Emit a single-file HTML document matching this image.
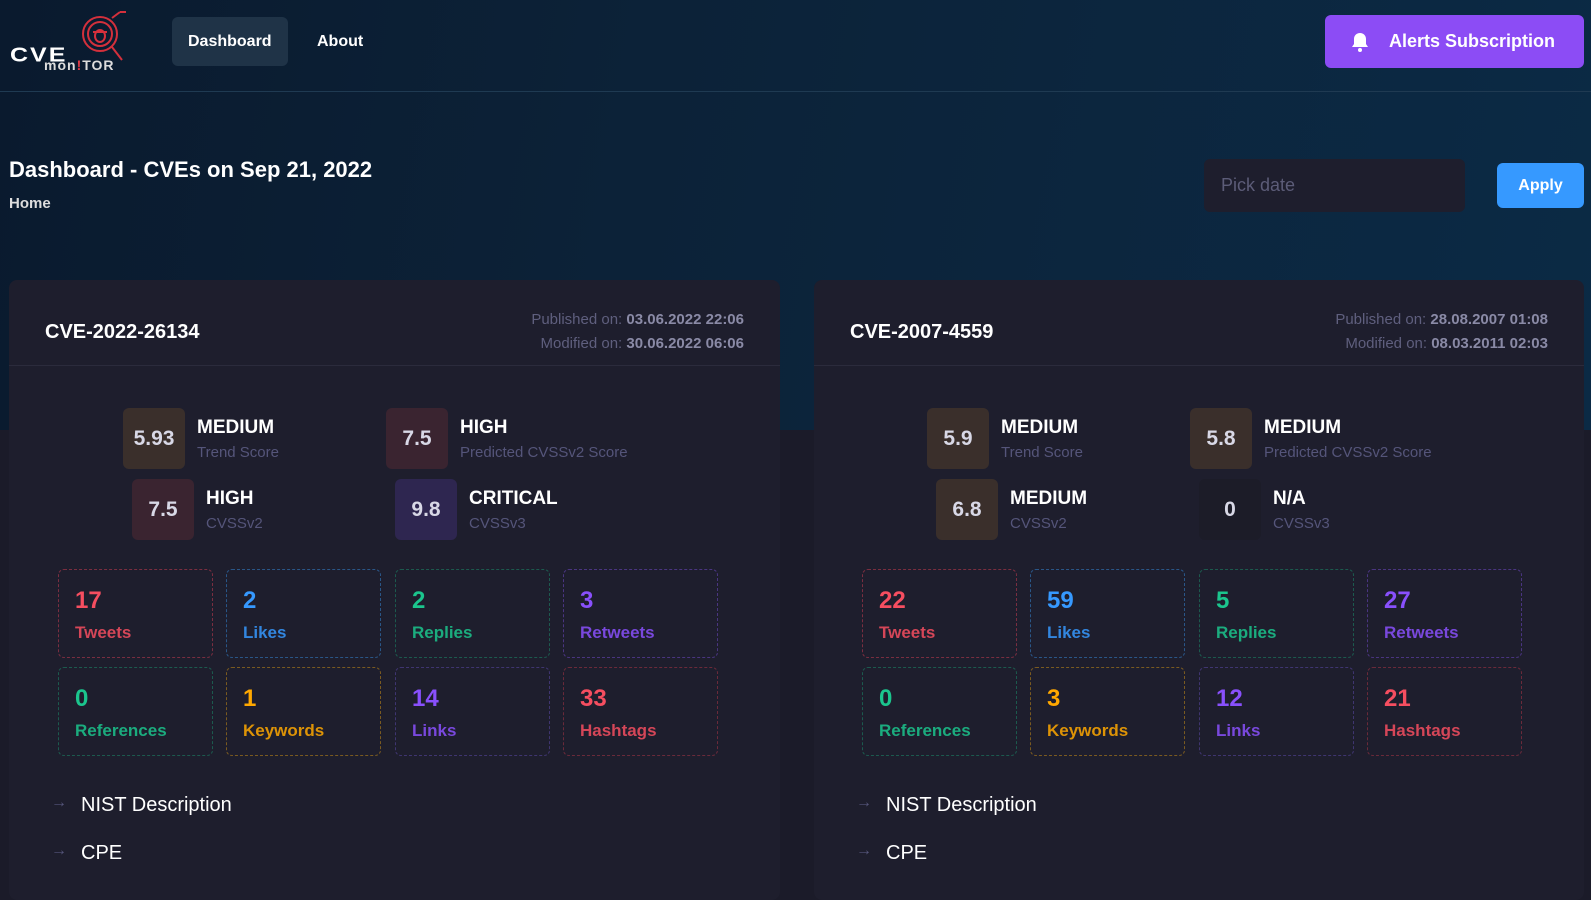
<!DOCTYPE html>
<html><head><meta charset="utf-8"><style>
*{box-sizing:border-box;margin:0;padding:0}
body{width:1591px;height:885px;overflow:hidden;font-family:"Liberation Sans",sans-serif;background:#1b1b29;position:relative;color:#fff}
.top{position:absolute;left:0;top:0;width:1591px;height:430px;background:linear-gradient(100deg,#0a1a2e 0%,#0c2238 40%,#0b2a45 100%)}
.hl{position:absolute;left:0;top:91px;width:1591px;height:1px;background:#1f3a52}
.nav{position:absolute;top:17px;height:49px;line-height:49px;font-size:16px;font-weight:bold;border-radius:6px;padding:0 16px}
.alert{position:absolute;left:1325px;top:15px;width:259px;height:53px;background:#8c4cf5;border-radius:6px;font-size:18px;font-weight:bold;line-height:53px;padding-left:64px}
.card{position:absolute;top:280px;width:771px;height:620px;background:#1e1e2d;border-radius:8px}
.ch{height:86px;border-bottom:1px solid #2b2b3c;position:relative}
.cid{position:absolute;left:36px;top:41px;font-size:20px;font-weight:bold}
.pub{position:absolute;right:36px;top:28px;text-align:right;font-size:15px;line-height:24px;color:#5f5f7e}
.pub b{color:#8a8aa6}
.sc{position:absolute;display:flex;align-items:center}
.sb{width:62px;height:61px;border-radius:6px;display:flex;align-items:center;justify-content:center;font-size:21px;font-weight:bold;color:#d8d8e6}
.st{margin-left:12px}
.st b{display:block;font-size:19px}
.st span{display:block;font-size:15px;color:#55557a;margin-top:5px}
.box{position:absolute;width:155px;height:89px;border:1px dashed;border-radius:6px;padding:17px 0 0 16px}
.box b{display:block;font-size:24px}
.box span{display:block;font-size:17px;font-weight:bold;margin-top:8px;opacity:.85}
.acc{position:absolute;left:72px;font-size:20px}
.ar{position:absolute;left:-30px;color:#55557a;font-size:16px}
</style></head><body>
<div class="top"></div>
<div class="hl"></div>
<div style="position:absolute;left:10px;top:41px;font-size:25px;font-weight:bold;letter-spacing:2px;transform:scaleY(.8)">CVE</div>
<div style="position:absolute;left:44px;top:57px;font-size:14px;font-weight:bold;letter-spacing:1px;color:#ddd">mon<span style="color:#e03a45">!</span>TOR</div>
<svg style="position:absolute;left:78px;top:10px" width="52" height="60" viewBox="0 0 52 60" fill="none" stroke="#d4303c" stroke-width="2"><circle cx="22" cy="24" r="17"/><circle cx="22" cy="24" r="12"/><line x1="34" y1="37" x2="44" y2="50"/><line x1="34" y1="8" x2="42" y2="2"/><line x1="42" y1="2" x2="48" y2="2"/><ellipse cx="22" cy="26" rx="5" ry="6"/><line x1="15" y1="22" x2="29" y2="22"/></svg>
<div class="nav" style="left:172px;background:#1f3347">Dashboard</div>
<div class="nav" style="left:301px">About</div>
<div class="alert"><svg style="position:absolute;left:26px;top:17px" width="18" height="20" viewBox="0 0 18 20"><path d="M9 1c-3.5 0-6 2.6-6 6v5l-2 3h16l-2-3V7c0-3.4-2.5-6-6-6z" fill="#fff"/><circle cx="9" cy="18" r="2" fill="#fff"/></svg>Alerts Subscription</div>
<div style="position:absolute;left:9px;top:157px;font-size:22px;font-weight:bold">Dashboard - CVEs on Sep 21, 2022</div>
<div style="position:absolute;left:9px;top:195px;font-size:15px;font-weight:bold;color:#ddd">Home</div>
<div style="position:absolute;left:1204px;top:159px;width:261px;height:53px;background:#1e1e2d;border-radius:6px;font-size:18px;color:#5c5c78;line-height:53px;padding-left:17px">Pick date</div>
<div style="position:absolute;left:1497px;top:163px;width:87px;height:45px;background:#3699ff;border-radius:6px;font-size:16px;font-weight:bold;line-height:45px;text-align:center">Apply</div>

<div class="card" style="left:9px">
<div class="ch"><div class="cid">CVE-2022-26134</div><div class="pub">Published on: <b>03.06.2022 22:06</b><br>Modified on: <b>30.06.2022 06:06</b></div></div>
<div class="sc" style="left:114px;top:128px"><div class="sb" style="background:#3a2f2b">5.93</div><div class="st"><b>MEDIUM</b><span>Trend Score</span></div></div>
<div class="sc" style="left:377px;top:128px"><div class="sb" style="background:#3a2430">7.5</div><div class="st"><b>HIGH</b><span>Predicted CVSSv2 Score</span></div></div>
<div class="sc" style="left:123px;top:199px"><div class="sb" style="background:#3a2430">7.5</div><div class="st"><b>HIGH</b><span>CVSSv2</span></div></div>
<div class="sc" style="left:386px;top:199px"><div class="sb" style="background:#2e2650">9.8</div><div class="st"><b>CRITICAL</b><span>CVSSv3</span></div></div>
<div class="box" style="left:49px;top:289px;border-color:#7a2e40;color:#f64e60"><b>17</b><span>Tweets</span></div>
<div class="box" style="left:217px;top:289px;border-color:#2a5687;color:#3699ff"><b>2</b><span>Likes</span></div>
<div class="box" style="left:386px;top:289px;border-color:#1c5a4e;color:#1bc58d"><b>2</b><span>Replies</span></div>
<div class="box" style="left:554px;top:289px;border-color:#4a3580;color:#8950fc"><b>3</b><span>Retweets</span></div>
<div class="box" style="left:49px;top:387px;border-color:#1c5a4e;color:#1bc58d"><b>0</b><span>References</span></div>
<div class="box" style="left:217px;top:387px;border-color:#7a5a20;color:#ffa800"><b>1</b><span>Keywords</span></div>
<div class="box" style="left:386px;top:387px;border-color:#3f3570;color:#8950fc"><b>14</b><span>Links</span></div>
<div class="box" style="left:554px;top:387px;border-color:#6a2a3a;color:#f64e60"><b>33</b><span>Hashtags</span></div>
<div class="acc" style="top:514px"><span class="ar">→</span>NIST Description</div>
<div class="acc" style="top:562px"><span class="ar">→</span>CPE</div>
</div>

<div class="card" style="left:814px;width:770px">
<div class="ch"><div class="cid">CVE-2007-4559</div><div class="pub">Published on: <b>28.08.2007 01:08</b><br>Modified on: <b>08.03.2011 02:03</b></div></div>
<div class="sc" style="left:113px;top:128px"><div class="sb" style="background:#3a2f2b">5.9</div><div class="st"><b>MEDIUM</b><span>Trend Score</span></div></div>
<div class="sc" style="left:376px;top:128px"><div class="sb" style="background:#3a2f2b">5.8</div><div class="st"><b>MEDIUM</b><span>Predicted CVSSv2 Score</span></div></div>
<div class="sc" style="left:122px;top:199px"><div class="sb" style="background:#3a2f2b">6.8</div><div class="st"><b>MEDIUM</b><span>CVSSv2</span></div></div>
<div class="sc" style="left:385px;top:199px"><div class="sb" style="background:#1c1c28">0</div><div class="st"><b>N/A</b><span>CVSSv3</span></div></div>
<div class="box" style="left:48px;top:289px;border-color:#7a2e40;color:#f64e60"><b>22</b><span>Tweets</span></div>
<div class="box" style="left:216px;top:289px;border-color:#2a5687;color:#3699ff"><b>59</b><span>Likes</span></div>
<div class="box" style="left:385px;top:289px;border-color:#1c5a4e;color:#1bc58d"><b>5</b><span>Replies</span></div>
<div class="box" style="left:553px;top:289px;border-color:#4a3580;color:#8950fc"><b>27</b><span>Retweets</span></div>
<div class="box" style="left:48px;top:387px;border-color:#1c5a4e;color:#1bc58d"><b>0</b><span>References</span></div>
<div class="box" style="left:216px;top:387px;border-color:#7a5a20;color:#ffa800"><b>3</b><span>Keywords</span></div>
<div class="box" style="left:385px;top:387px;border-color:#3f3570;color:#8950fc"><b>12</b><span>Links</span></div>
<div class="box" style="left:553px;top:387px;border-color:#6a2a3a;color:#f64e60"><b>21</b><span>Hashtags</span></div>
<div class="acc" style="top:514px"><span class="ar">→</span>NIST Description</div>
<div class="acc" style="top:562px"><span class="ar">→</span>CPE</div>
</div>
</body></html>
